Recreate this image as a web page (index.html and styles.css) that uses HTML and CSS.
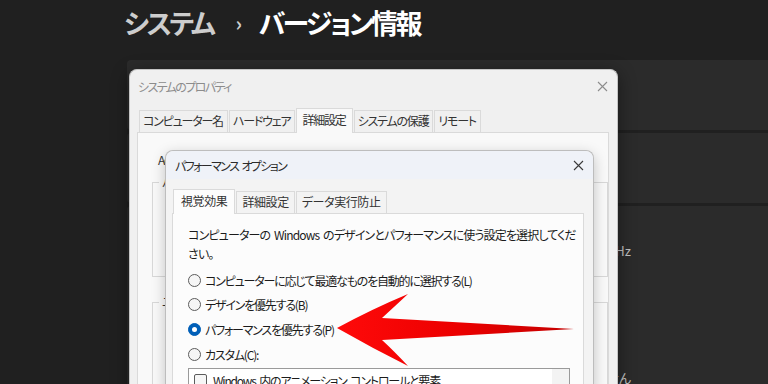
FILE: index.html
```html
<!DOCTYPE html>
<html lang="ja">
<head>
    <meta charset="UTF-8">
    <meta name="viewport" content="width=device-width, initial-scale=1.0">
    <title>バージョン情報</title>
    <link rel="stylesheet" href="styles.css">
</head>
<body>
<div class="screen">
    <h1 class="crumb">
        <span class="crumb-parent">システム</span><span class="crumb-sep">›</span><span class="crumb-current">バージョン情報</span>
    </h1>

    <div class="cards">
        <div class="card card-top"></div>
        <div class="card card-mid"></div>
        <div class="card card-spec">
            <div class="spec-row">2.30 GHz</div>
            <div class="spec-row spec-last">使用できません</div>
        </div>
    </div>

    <!-- システムのプロパティ (inactive window) -->
    <div class="dialog sysprop">
        <div class="dialog-title">
            <span class="title-text">システムのプロパティ</span>
            <svg class="close" width="11" height="11" viewBox="0 0 11 11"><path d="M1 1L10 10M10 1L1 10"/></svg>
        </div>
        <div class="tabs">
            <div class="tab">コンピューター名</div>
            <div class="tab">ハードウェア</div>
            <div class="tab active">詳細設定</div>
            <div class="tab">システムの保護</div>
            <div class="tab">リモート</div>
        </div>
        <div class="panel sys-panel">
            <p class="admin-note">Administrator としてサインインしない場合は、これらのほとんどは変更できません。</p>
            <div class="group"><span class="legend">パフォーマンス</span></div>
            <div class="group"><span class="legend">ユーザー プロファイル</span></div>
        </div>
    </div>

    <!-- パフォーマンス オプション (active window) -->
    <div class="dialog perf">
        <div class="dialog-title perf-title">
            <span class="title-text">パフォーマンス オプション</span>
            <svg class="close" width="11" height="11" viewBox="0 0 11 11"><path d="M1 1L10 10M10 1L1 10"/></svg>
        </div>
        <div class="tabs perf-tabs">
            <div class="tab active">視覚効果</div>
            <div class="tab">詳細設定</div>
            <div class="tab">データ実行防止</div>
        </div>
        <div class="panel perf-panel">
            <p class="desc">コンピューターの Windows のデザインとパフォーマンスに使う設定を選択してくだ<br>さい。</p>
            <div class="radios">
                <label class="radio"><span class="dot"></span>コンピューターに応じて最適なものを自動的に選択する(L)</label>
                <label class="radio"><span class="dot"></span>デザインを優先する(B)</label>
                <label class="radio"><span class="dot on"></span>パフォーマンスを優先する(P)</label>
                <label class="radio"><span class="dot"></span>カスタム(C):</label>
            </div>
            <div class="listbox">
                <div class="list-items">
                    <div class="check-row"><span class="box"></span>Windows 内のアニメーション コントロールと要素</div>
                </div>
                <div class="scroll"></div>
            </div>
        </div>
    </div>

    <svg class="arrow" width="768" height="384" viewBox="0 0 768 384">
        <defs>
            <linearGradient id="red" x1="0" y1="0" x2="1" y2="0">
                <stop offset="0" stop-color="#ff0a0a"/>
                <stop offset="0.5" stop-color="#ec0000"/>
                <stop offset="1" stop-color="#c40000"/>
            </linearGradient>
        </defs>
        <path d="M337 328 Q372 309 408 294 Q394 307 382 318 L574 329 L382 340 Q394 351 408 366 Q372 348 337 328 Z" fill="url(#red)"/>
    </svg>
</div>
</body>
</html>
```

FILE: styles.css
```css
*,
*::before,
*::after {
    box-sizing: border-box;
}
body {
    margin: 0;
    background-color: #202020;
    font-family: "Noto Sans CJK JP", "Noto Sans", sans-serif;
    font-feature-settings: "palt";
}
.screen {
    position: relative;
    width: 768px;
    height: 384px;
    overflow: hidden;
}
.crumb {
    margin: 0;
    height: 60px;
    padding: 3px 0 0 124px;
    font-size: 27px;
    line-height: 40px;
    font-weight: 700;
    color: #ffffff;
}
.crumb-parent {
    color: #cdcdcd;
    font-weight: 600;
    letter-spacing: -2.5px;
}
.crumb-sep {
    display: inline-block;
    margin: 0 17px 0 22px;
    font-size: 20px;
    color: #cdcdcd;
    vertical-align: 3px;
}
.crumb-current {
    letter-spacing: -2.6px;
}
.cards {
    display: flex;
    flex-direction: column;
    gap: 3px;
    margin-left: 127px;
}
.card {
    background-color: #2b2b2b;
    border-radius: 4px 0 0 4px;
}
.card-top {
    height: 70px;
}
.card-mid {
    height: 70px;
}
.card-spec {
    height: 200px;
    padding-top: 35px;
}
.spec-row {
    width: 504px;
    text-align: right;
    font-size: 13px;
    line-height: 20px;
    color: #c4c4c4;
}
.spec-last {
    margin-top: 107px;
}

/* dialogs */
.dialog {
    position: absolute;
    background-color: #f0f0f0;
    border: 1px solid #c4c4c4;
    border-bottom: none;
    border-radius: 8px 8px 0 0;
    font-size: 12px;
    letter-spacing: -1.2px;
    word-spacing: 2px;
    color: #1b1b1b;
}
.dialog-title {
    display: flex;
    align-items: center;
    justify-content: space-between;
    height: 32px;
    padding: 0 9px 0 8px;
    color: #8c8c8c;
}
.title-text {
    letter-spacing: -1.6px;
}
.close {
    fill: none;
    stroke: #8c8c8c;
    stroke-width: 1.1;
}
.sysprop {
    left: 129px;
    top: 69px;
    width: 489px;
    height: 330px;
    box-shadow: 0 4px 18px rgba(0, 0, 0, 0.45);
}
.tabs {
    display: flex;
    align-items: flex-end;
    height: 30px;
    padding: 6px 0 0 9px;
}
.tab {
    height: 22px;
    padding: 0 4px 0 3px;
    margin-right: 1px;
    border: 1px solid #dadada;
    border-bottom: none;
    background-color: #f0f0f0;
    line-height: 20px;
    color: #333333;
    white-space: nowrap;
}
.tab.active {
    position: relative;
    z-index: 1;
    height: 25px;
    margin-bottom: -1px;
    padding: 0 6px 0 5px;
    background-color: #f9f9f9;
    line-height: 22px;
}
.panel {
    background-color: #f9f9f9;
    border: 1px solid #dadada;
}
.sys-panel {
    height: 270px;
    margin: 0 8px 0 7px;
    padding: 19px 0 0 14px;
}
.admin-note {
    margin: 0 0 0 6px;
    white-space: nowrap;
    line-height: 16px;
    color: #333333;
}
.group {
    position: relative;
    height: 95px;
    margin-top: 14px;
    border: 1px solid #d8d8d8;
}
.group + .group {
    margin-top: 25px;
}
.legend {
    position: absolute;
    left: 6px;
    top: -9px;
    padding: 0 3px;
    background-color: #f9f9f9;
    white-space: nowrap;
    line-height: 16px;
    color: #333333;
}

/* performance options */
.perf {
    left: 165px;
    top: 150px;
    width: 429px;
    height: 240px;
    background-color: #f3f3f3;
    border-color: #bdbdbd;
    box-shadow: 0 4px 14px rgba(0, 0, 0, 0.22);
}
.perf-title {
    height: 28px;
    padding: 0 9px 0 9px;
    border-radius: 8px 8px 0 0;
    background-color: #eff2f8;
    color: #2b2b2b;
}
.perf-title .close {
    stroke: #3a3a3a;
}
.perf-tabs {
    height: 34px;
    padding: 9px 0 0 7px;
    letter-spacing: -0.4px;
}
.perf-tabs .tab {
    padding: 0 5px;
    background-color: #f3f3f3;
}
.perf-tabs .tab.active {
    padding: 0 7px;
    background-color: #fcfcfc;
}
.perf-panel {
    height: 200px;
    margin: 0 9px 0 6px;
    padding: 11px 0 0 15px;
    background-color: #fcfcfc;
}
.desc {
    margin: 0;
    line-height: 19px;
    letter-spacing: -0.85px;
    color: #1b1b1b;
    white-space: nowrap;
}
.radios {
    display: flex;
    flex-direction: column;
    margin-top: 5px;
}
.radio {
    display: flex;
    align-items: center;
    gap: 4px;
    height: 24.6px;
    white-space: nowrap;
}
.dot {
    position: relative;
    flex: none;
    width: 13px;
    height: 13px;
    border: 1px solid #5c5c5c;
    border-radius: 50%;
    background-color: #f6f6f6;
}
.dot.on {
    border-color: #005fb8;
    background-color: #005fb8;
}
.dot.on::after {
    content: "";
    position: absolute;
    left: 3px;
    top: 3px;
    width: 5px;
    height: 5px;
    border-radius: 50%;
    background-color: #ffffff;
}
.listbox {
    display: flex;
    width: 382px;
    height: 60px;
    margin-top: 2px;
    border: 1px solid #9a9a9a;
    background-color: #ffffff;
}
.list-items {
    flex: 1;
    padding: 4px 0 0 5px;
}
.scroll {
    width: 17px;
    background-color: #f3f3f3;
}
.check-row {
    display: flex;
    align-items: center;
    gap: 6px;
    height: 14px;
    white-space: nowrap;
}
.box {
    flex: none;
    width: 13px;
    height: 13px;
    border: 1px solid #5c5c5c;
    border-radius: 2px;
    background-color: #f6f6f6;
}
.arrow {
    position: absolute;
    left: 0;
    top: 0;
    pointer-events: none;
}
```
